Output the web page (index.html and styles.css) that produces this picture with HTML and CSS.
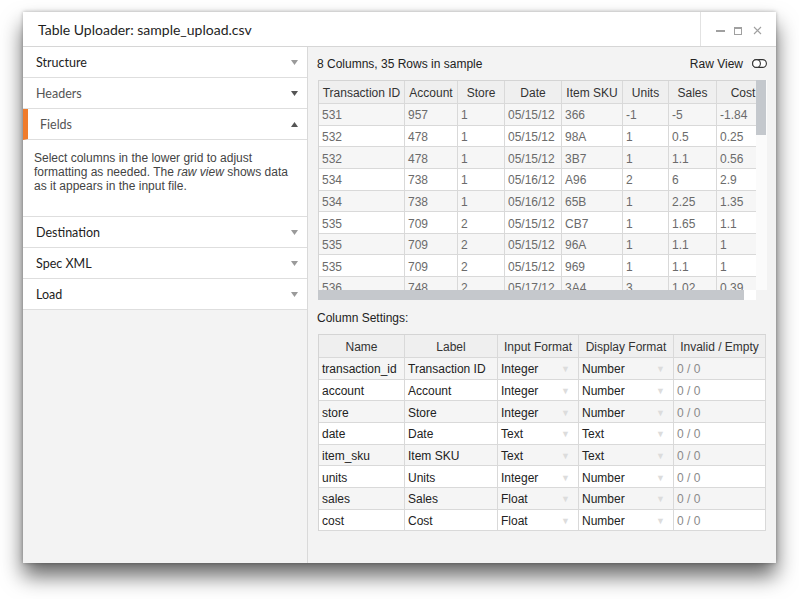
FILE: index.html
```html
<!DOCTYPE html>
<html>
<head>
<meta charset="utf-8">
<title>Table Uploader</title>
<link rel="stylesheet" href="styles.css">
</head>
<body>
<div class="window">
  <div class="titlebar">
    <div class="title">Table Uploader: sample_upload.csv</div>
    <div class="controls">
      <svg class="ic-min" width="9" height="9" viewBox="0 0 9 9"><rect x="0" y="4" width="9" height="2" fill="#a0a0a0"/></svg>
      <svg class="ic-max" width="8" height="8" viewBox="0 0 8 8"><rect x="0.5" y="0.5" width="7" height="7" fill="none" stroke="#a0a0a0"/><rect x="0" y="0" width="8" height="2" fill="#a0a0a0"/></svg>
      <svg class="ic-close" width="9" height="9" viewBox="0 0 9 9"><path d="M1 1L8 8M8 1L1 8" stroke="#a0a0a0" stroke-width="1.1"/></svg>
    </div>
  </div>
  <div class="main">
    <div class="sidebar">
      <div class="acc">
        <div class="acc-item dark"><span>Structure</span><svg class="caret light" width="7" height="5" viewBox="0 0 7 5"><polygon points="0,0 7,0 3.5,5"/></svg></div>
        <div class="acc-item gray"><span>Headers</span><svg class="caret" width="7" height="5" viewBox="0 0 7 5"><polygon points="0,0 7,0 3.5,5"/></svg></div>
        <div class="acc-item gray active"><span>Fields</span><svg class="caret" width="7" height="5" viewBox="0 0 7 5"><polygon points="0,5 7,5 3.5,0"/></svg></div>
        <div class="acc-desc">Select columns in the lower grid to adjust formatting as needed. The <em>raw view</em> shows data as it appears in the input file.</div>
        <div class="acc-item dark"><span>Destination</span><svg class="caret light" width="7" height="5" viewBox="0 0 7 5"><polygon points="0,0 7,0 3.5,5"/></svg></div>
        <div class="acc-item dark"><span>Spec XML</span><svg class="caret light" width="7" height="5" viewBox="0 0 7 5"><polygon points="0,0 7,0 3.5,5"/></svg></div>
        <div class="acc-item dark"><span>Load</span><svg class="caret light" width="7" height="5" viewBox="0 0 7 5"><polygon points="0,0 7,0 3.5,5"/></svg></div>
      </div>
    </div>
    <div class="content">
      <div class="toolbar">
        <span class="summary">8 Columns, 35 Rows in sample</span>
        <span class="raw">Raw View
          <svg class="toggle" width="15" height="9" viewBox="0 0 15 9"><rect x="0.6" y="0.6" width="13.8" height="7.8" rx="3.9" fill="#fff" stroke="#333" stroke-width="1.1"/><circle cx="4.5" cy="4.5" r="3.9" fill="#fff" stroke="#333" stroke-width="1.1"/></svg>
        </span>
      </div>
      <div class="grid">
        <div class="viewport">
          <div class="dtable">
            <div class="drow head"><div>Transaction ID</div><div>Account</div><div>Store</div><div>Date</div><div>Item SKU</div><div>Units</div><div>Sales</div><div>Cost</div></div>
            <div class="drow odd"><div>531</div><div>957</div><div>1</div><div>05/15/12</div><div>366</div><div>-1</div><div>-5</div><div>-1.84</div></div>
            <div class="drow"><div>532</div><div>478</div><div>1</div><div>05/15/12</div><div>98A</div><div>1</div><div>0.5</div><div>0.25</div></div>
            <div class="drow odd"><div>532</div><div>478</div><div>1</div><div>05/15/12</div><div>3B7</div><div>1</div><div>1.1</div><div>0.56</div></div>
            <div class="drow"><div>534</div><div>738</div><div>1</div><div>05/16/12</div><div>A96</div><div>2</div><div>6</div><div>2.9</div></div>
            <div class="drow odd"><div>534</div><div>738</div><div>1</div><div>05/16/12</div><div>65B</div><div>1</div><div>2.25</div><div>1.35</div></div>
            <div class="drow"><div>535</div><div>709</div><div>2</div><div>05/15/12</div><div>CB7</div><div>1</div><div>1.65</div><div>1.1</div></div>
            <div class="drow odd"><div>535</div><div>709</div><div>2</div><div>05/15/12</div><div>96A</div><div>1</div><div>1.1</div><div>1</div></div>
            <div class="drow"><div>535</div><div>709</div><div>2</div><div>05/15/12</div><div>969</div><div>1</div><div>1.1</div><div>1</div></div>
            <div class="drow odd"><div>536</div><div>748</div><div>2</div><div>05/17/12</div><div>3A4</div><div>3</div><div>1.02</div><div>0.39</div></div>
          </div>
        </div>
        <div class="vscroll"><div class="vthumb"></div></div>
        <div class="hscroll"><div class="hthumb"></div></div>
        <div class="corner"></div>
      </div>
      <div class="section-label">Column Settings:</div>
      <div class="stable">
        <div class="srow head"><div>Name</div><div>Label</div><div>Input Format</div><div>Display Format</div><div>Invalid / Empty</div></div>
        <div class="srow odd"><div>transaction_id</div><div>Transaction ID</div><div class="sel"><span>Integer</span><i class="tri">▼</i></div><div class="sel"><span>Number</span><i class="tri">▼</i></div><div class="cnt">0 / 0</div></div>
        <div class="srow"><div>account</div><div>Account</div><div class="sel"><span>Integer</span><i class="tri">▼</i></div><div class="sel"><span>Number</span><i class="tri">▼</i></div><div class="cnt">0 / 0</div></div>
        <div class="srow odd"><div>store</div><div>Store</div><div class="sel"><span>Integer</span><i class="tri">▼</i></div><div class="sel"><span>Number</span><i class="tri">▼</i></div><div class="cnt">0 / 0</div></div>
        <div class="srow"><div>date</div><div>Date</div><div class="sel"><span>Text</span><i class="tri">▼</i></div><div class="sel"><span>Text</span><i class="tri">▼</i></div><div class="cnt">0 / 0</div></div>
        <div class="srow odd"><div>item_sku</div><div>Item SKU</div><div class="sel"><span>Text</span><i class="tri">▼</i></div><div class="sel"><span>Text</span><i class="tri">▼</i></div><div class="cnt">0 / 0</div></div>
        <div class="srow"><div>units</div><div>Units</div><div class="sel"><span>Integer</span><i class="tri">▼</i></div><div class="sel"><span>Number</span><i class="tri">▼</i></div><div class="cnt">0 / 0</div></div>
        <div class="srow odd"><div>sales</div><div>Sales</div><div class="sel"><span>Float</span><i class="tri">▼</i></div><div class="sel"><span>Number</span><i class="tri">▼</i></div><div class="cnt">0 / 0</div></div>
        <div class="srow"><div>cost</div><div>Cost</div><div class="sel"><span>Float</span><i class="tri">▼</i></div><div class="sel"><span>Number</span><i class="tri">▼</i></div><div class="cnt">0 / 0</div></div>
      </div>
    </div>
  </div>
</div>
</body>
</html>
```

FILE: styles.css
```css
* { box-sizing: border-box; }
html, body { margin: 0; padding: 0; background: #fff; }
body {
  font-family: "Liberation Sans", Arial, sans-serif;
  font-size: 12px;
  color: #222;
  min-height: 599px;
  padding: 12px 0 0 23px;
}
.window {
  width: 753px;
  height: 551px;
  background: #f3f3f3;
  display: flex;
  flex-direction: column;
  box-shadow: 0 13px 20px rgba(0,0,0,.6), 0 0 4px rgba(0,0,0,.3);
}
.titlebar {
  height: 35px;
  flex: none;
  display: flex;
  background: #fff;
  border-bottom: 1px solid #d6d6d6;
}
.title {
  flex: 1;
  padding: 1px 0 0 15px;
  display: flex;
  align-items: center;
  font-family: Lato, "Open Sans", sans-serif;
  font-size: 14px;
  color: #1e1e1e;
}
.controls {
  width: 76px;
  border-left: 1px solid #e2e2e2;
  display: flex;
  align-items: center;
  justify-content: center;
  padding-top: 3px;
}
.ic-min { margin-right: 9px; }
.ic-max { margin-right: 11px; }
.main { flex: 1; display: flex; min-height: 0; }
.sidebar {
  width: 285px;
  flex: none;
  border-right: 1px solid #d9d9d9;
}
.acc { background: #fff; }
.acc-item {
  height: 31px;
  border-bottom: 1px solid #dedede;
  display: flex;
  align-items: center;
  justify-content: space-between;
  padding: 0 9px 0 13px;
  font-family: Lato, "Open Sans", sans-serif;
  font-size: 12.5px;
}
.acc-item.dark { color: #222; }
.acc-item.gray { color: #555; }
.acc-item.active {
  border-left: 5px solid #f07c2c;
  padding-left: 12px;
}
.caret { fill: #555; }
.caret.light { fill: #9a9a9a; }
.acc-desc {
  height: 77px;
  border-bottom: 1px solid #dedede;
  padding: 11px 10px 0 11px;
  line-height: 14px;
  color: #444;
}
.content {
  flex: 1;
  min-width: 0;
  padding: 0 9px 0 10px;
}
.toolbar {
  height: 33px;
  display: flex;
  align-items: center;
  justify-content: space-between;
  color: #222;
}
.summary { margin-left: -1px; }
.raw { display: flex; align-items: center; gap: 9px; }
.grid {
  display: grid;
  grid-template-columns: 438px 11px;
  grid-template-rows: 210px 10px;
}
.viewport { overflow: hidden; background: #fff; }
.vscroll { background: #fbfbfb; }
.vthumb { height: 55px; background: #c4c8cd; margin-right: 1px; }
.hscroll { background: #fff; }
.hthumb { width: 426px; height: 10px; background: #c5c8cc; }
.corner { background: transparent; }

.dtable {
  width: 452px;
  border-left: 1px solid #d4d4d4;
  border-top: 1px solid #d4d4d4;
}
.drow {
  display: grid;
  grid-template-columns: 86px 53px 47px 57px 61px 46px 48px 53px;
  height: 21.65px;
  background: #fff;
  color: #6b6b6b;
}
.drow.odd { background: #f6f6f6; }
.drow > div {
  border-right: 1px solid #d9d9d9;
  border-bottom: 1px solid #d9d9d9;
  display: flex;
  align-items: center;
  padding: 2px 0 0 3px;
  white-space: nowrap;
  overflow: hidden;
}
.drow.head { height: 23px; background: #efefef; color: #333; }
.drow.head > div { justify-content: center; padding: 1px 0 0 0; }

.section-label {
  height: 34px;
  display: flex;
  align-items: center;
  padding-top: 2px;
  margin-left: -1px;
  color: #222;
}
.stable {
  width: 448px;
  border-left: 1px solid #d4d4d4;
  border-top: 1px solid #d4d4d4;
}
.srow {
  display: grid;
  grid-template-columns: 86px 93px 81px 95px 92px;
  height: 21.67px;
  background: #fff;
  color: #222;
}
.srow.odd { background: #f5f5f5; }
.srow > div {
  border-right: 1px solid #d9d9d9;
  border-bottom: 1px solid #d9d9d9;
  display: flex;
  align-items: center;
  padding: 2px 0 0 3px;
  white-space: nowrap;
  overflow: hidden;
}
.srow.head { height: 23px; background: #efefef; color: #333; }
.srow.head > div { justify-content: center; padding: 1px 0 0 0; }
.srow > .sel { justify-content: space-between; padding-right: 8px; }
.tri { font-style: normal; font-size: 9px; color: #dcdcdc; }
.srow > .cnt { color: #8a8a8a; }
```
